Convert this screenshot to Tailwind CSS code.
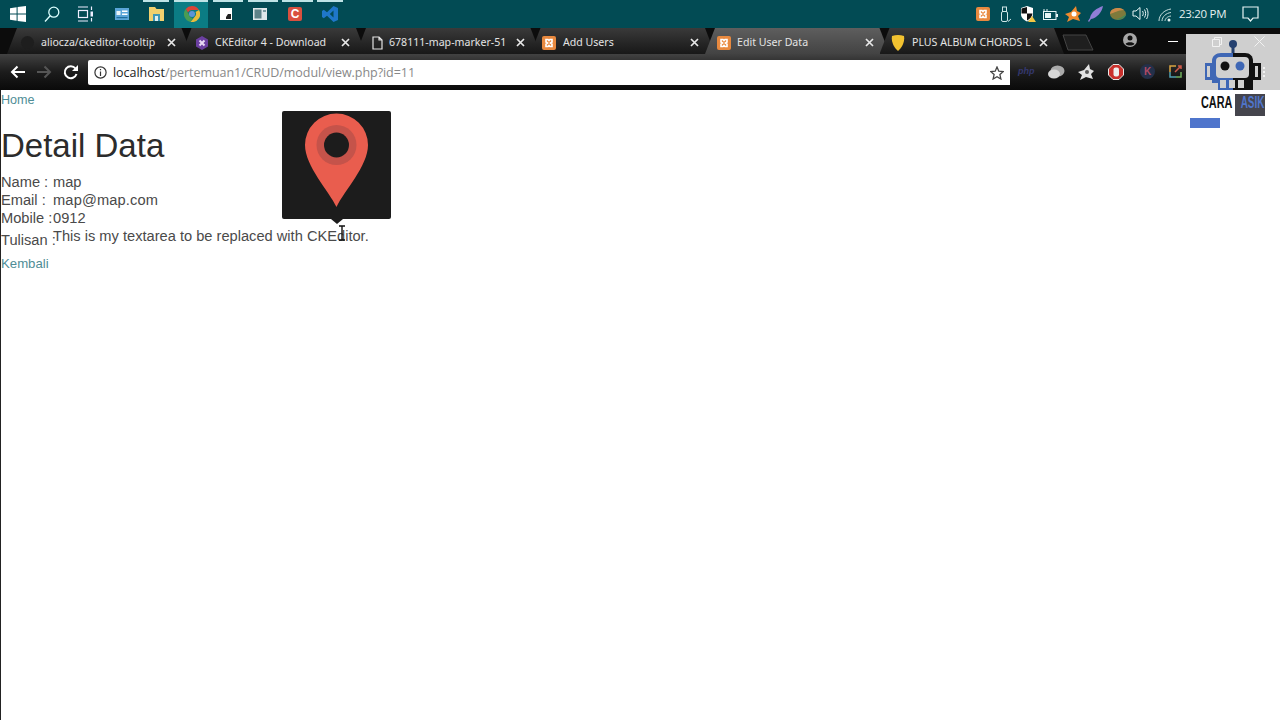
<!DOCTYPE html>
<html lang="en">
<head>
    <meta charset="UTF-8">
    <meta name="viewport" content="width=device-width, initial-scale=1.0">
    <title>Edit User Data</title>
    <script src="https://cdn.jsdelivr.net/npm/@tailwindcss/browser@4"></script>
</head>
<body class="relative w-[1280px] h-[720px] overflow-hidden bg-white font-['Liberation_Sans',sans-serif]">

    <!-- windows taskbar -->
    <div class="relative h-[28px] bg-[#024b54] flex items-center text-[#e6f0f0]">
        <div class="absolute left-[143px] top-0 w-[26px] h-[2px] bg-[#bfe3e6]"></div>
        <div class="absolute left-[174px] top-0 w-[34px] h-[28px] bg-[#0b7c84] border-t-2 border-[#bfe3e6]"></div>
        <div class="absolute left-[213px] top-0 w-[30px] h-[2px] bg-[#bfe3e6]"></div>
        <div class="absolute left-[248px] top-0 w-[30px] h-[2px] bg-[#bfe3e6]"></div>
        <div class="absolute left-[282px] top-0 w-[31px] h-[2px] bg-[#bfe3e6]"></div>
        <div class="absolute left-[317px] top-0 w-[26px] h-[2px] bg-[#bfe3e6]"></div>

        <svg class="absolute left-[10px] top-[6px]" width="16" height="16" viewBox="0 0 16 16"><path fill="#fff" d="M0 2.2 6.6 1.2V7.4H0ZM7.6 1 16 0V7.4H7.6ZM0 8.4H6.6V14.7L0 13.8ZM7.6 8.4H16V16L7.6 14.9Z"/></svg>
        <svg class="absolute left-[44px] top-[6px]" width="16" height="17" viewBox="0 0 16 17" fill="none" stroke="#dff" stroke-width="1.3"><circle cx="9.8" cy="6.2" r="5"/><path d="M6.2 9.8 1 15.5"/></svg>
        <svg class="absolute left-[77px] top-[6px]" width="17" height="16" viewBox="0 0 17 16" fill="none" stroke="#eef" stroke-width="1.2"><path d="M1 1H11M1 15H11"/><rect x="1.5" y="4.5" width="9" height="7"/><path d="M14.5 0.5V4M14.5 12V15.5"/><rect x="13.5" y="5.5" width="2.5" height="5" fill="#eef" stroke="none"/></svg>
        <svg class="absolute left-[115px] top-[8px]" width="14" height="12" viewBox="0 0 14 12"><rect width="14" height="12" fill="#5aa5d8"/><rect x="1.5" y="3" width="4" height="4" fill="#e8f4f8"/><rect x="7" y="2.5" width="5.5" height="1.5" fill="#fff"/><rect x="7" y="5.5" width="5.5" height="1.5" fill="#fff"/><rect x="1.5" y="9" width="11" height="1.2" fill="#1d6d9c"/></svg>
        <svg class="absolute left-[149px] top-[6px]" width="15" height="15" viewBox="0 0 15 15"><path fill="#f1d06e" d="M0 1H6L7.5 3H15V15H0Z"/><path fill="#3f97b7" d="M4 8H11V15H4Z"/><path fill="#dfeef2" d="M6 10H9V15H6Z"/></svg>
        <svg class="absolute left-[184px] top-[6px]" width="16" height="16" viewBox="0 0 16 16"><path fill="#db4437" d="M8 0A8 8 0 0 1 15 4H8A4 4 0 0 0 4 6.5L1.7 3A8 8 0 0 1 8 0Z"/><path fill="#4a9c54" d="M1.7 3 5 8.7A4 4 0 0 0 8.7 12L6.5 15.9A8 8 0 0 1 1.7 3Z"/><path fill="#e7bd3c" d="M15 4A8 8 0 0 1 6.5 15.9L10.5 11A4 4 0 0 0 11.5 6 L15 4Z"/><circle cx="8" cy="8" r="3" fill="#5c94d6"/></svg>
        <svg class="absolute left-[220px] top-[8px]" width="12" height="12" viewBox="0 0 12 12"><path fill="#fff" d="M0 0H12V12H0Z"/><path fill="#222" d="M11 6V11H6V9L8 6Z"/></svg>
        <svg class="absolute left-[253px] top-[8px]" width="14" height="12" viewBox="0 0 14 12"><rect width="14" height="12" fill="#dfe8ea"/><rect x="1.5" y="1.5" width="7" height="9" fill="#5d8288"/><rect x="10" y="2" width="3" height="2" fill="#7d9da2"/></svg>
        <div class="absolute left-[288px] top-[7px] w-[14px] h-[14px] rounded-[2px] bg-[#d9503f] text-white text-[12px] leading-[14px] font-bold text-center">C</div>
        <svg class="absolute left-[322px] top-[6px]" width="16" height="16" viewBox="0 0 16 16"><path fill="#1f77c9" d="M11.5 0 16 2V14L11.5 16 5 9.8 1.8 12.2 0 11V5L1.8 3.8 5 6.2ZM11.5 4.5 7.8 8 11.5 11.5Z"/></svg>

        <!-- tray -->
        <svg class="absolute left-[976px] top-[7px]" width="14" height="14" viewBox="0 0 14 14"><rect width="14" height="14" rx="2" fill="#e8893f"/><path fill="none" stroke="#fff" stroke-width="1.6" d="M4 3.5H6L7 4.5 8 3.5H10V6L8.5 7 10 8V10.5H8L7 9.5 6 10.5H4V8L5.5 7 4 6Z"/></svg>
        <svg class="absolute left-[1000px] top-[6px]" width="12" height="17" viewBox="0 0 12 17" fill="none" stroke="#cfe6e6" stroke-width="1"><rect x="1.5" y="5.5" width="6" height="10" rx="1.5"/><rect x="2.5" y="1" width="4" height="4.5"/><path d="M8 15.5 11 13"/></svg>
        <svg class="absolute left-[1020px] top-[6px]" width="16" height="16" viewBox="0 0 16 16"><path fill="#fff" d="M7 0 13 2V8C13 12 10 14 7 15.5 4 14 1 12 1 8V2Z"/><path fill="#111" d="M7 1V7.5H1.5V2.5ZM7 7.5H12.5C12 11 10 13 7 14.5Z"/><path fill="#f2c744" d="M12 10 16 16H8Z"/></svg>
        <svg class="absolute left-[1043px] top-[9px]" width="15" height="11" viewBox="0 0 15 11"><rect x="0.5" y="2.5" width="12.5" height="8" fill="none" stroke="#e6f4f4"/><rect x="2" y="4" width="6" height="5" fill="#e6f4f4"/><rect x="13" y="5" width="2" height="3" fill="#e6f4f4"/><path d="M1 2V0M4 2V0" stroke="#e6f4f4"/></svg>
        <svg class="absolute left-[1065px] top-[6px]" width="16" height="16" viewBox="0 0 16 16"><path fill="#ef8a2e" d="M11 0 12 5 16 7 13 10 15 15 8 13 2 16 4 11 0 8 6 6Z"/><circle cx="9" cy="8" r="2.5" fill="#fff"/></svg>
        <svg class="absolute left-[1088px] top-[6px]" width="15" height="16" viewBox="0 0 15 16"><path fill="#8f7ed6" d="M15 0C14 6 9 12 3 13L1 16 0 15 2 12C3 6 9 2 15 0Z"/></svg>
        <svg class="absolute left-[1110px] top-[8px]" width="16" height="12" viewBox="0 0 16 12"><ellipse cx="8" cy="6" rx="8" ry="6" fill="#7d7a3c"/><path fill="#c98a4a" d="M0 6A8 6 0 0 1 14 2C8 2 4 5 0 6Z"/><path fill="#3f8a5a" d="M5 11C9 11 13 9 16 6A8 6 0 0 1 5 11Z"/></svg>
        <svg class="absolute left-[1132px] top-[6px]" width="17" height="15" viewBox="0 0 17 15" fill="none" stroke="#e6f4f4" stroke-width="1"><path d="M1 5H4L8 1.5V13.5L4 10H1Z"/><path d="M10.5 5C11.5 6.5 11.5 8.5 10.5 10M12.5 3.5C14 6 14 9 12.5 11.5M14.5 2C16.5 5 16.5 10 14.5 13"/></svg>
        <svg class="absolute left-[1158px] top-[8px]" width="14" height="14" viewBox="0 0 14 14" fill="none" stroke="#c4dcdc" stroke-width="1"><path d="M1 13C1 7 6 2 13 1M4 13C4 9 8 5 13 4.5M7 13C7 11 9 8.5 13 8"/><circle cx="11" cy="12" r="1.5" fill="#e6f4f4" stroke="none"/></svg>
        <span class="absolute left-[1179px] top-[6px] font-['Open_Sans',sans-serif] text-[11.5px] leading-[16px] tracking-[-0.3px] whitespace-nowrap">23:20 PM</span>
        <svg class="absolute left-[1242px] top-[6px]" width="17" height="16" viewBox="0 0 17 16" fill="none" stroke="#e6f4f4" stroke-width="1.2"><path d="M1 1H16V12H11L8.5 15 6 12H1Z"/></svg>
    </div>

    <!-- tab strip -->
    <div class="relative h-[26px] bg-[#0c0c0c] flex pl-[7px] text-[10.6px] font-['Noto_Sans',sans-serif] text-[#e4e4e4]">
        <div class="w-[184.5px] shrink-0 -mr-[10px] pt-[3px] bg-gradient-to-b from-[#3a3a3a] to-[#181818] [clip-path:polygon(0_100%,10px_0,174.5px_0,184.5px_100%)] flex items-center pl-[13.5px]">
            <div class="w-[13px] h-[13px] rounded-full bg-[#1e1e1e] shrink-0"></div>
            <span class="ml-[7.5px] flex-1 whitespace-nowrap">aliocza/ckeditor-tooltip</span>
            <svg class="ml-[8px] mr-[16px] shrink-0" width="9" height="9" viewBox="0 0 9 9" stroke="#e8e8e8" stroke-width="1.7"><path d="M1 1 8 8M8 1 1 8"/></svg>
        </div>
        <div class="w-[184.5px] shrink-0 -mr-[10px] pt-[3px] bg-gradient-to-b from-[#3a3a3a] to-[#181818] [clip-path:polygon(0_100%,10px_0,174.5px_0,184.5px_100%)] flex items-center pl-[13.5px]">
            <svg class="shrink-0" width="14" height="14" viewBox="0 0 14 14"><path fill="#6b3fa0" d="M7 0 13 3.5V10.5L7 14 1 10.5V3.5Z"/><path stroke="#e8d8f4" stroke-width="2" d="M4.5 4.5 9.5 9.5M9.5 4.5 4.5 9.5"/></svg>
            <span class="ml-[6px] flex-1 whitespace-nowrap">CKEditor 4 - Download</span>
            <svg class="ml-[8px] mr-[16px] shrink-0" width="9" height="9" viewBox="0 0 9 9" stroke="#e8e8e8" stroke-width="1.7"><path d="M1 1 8 8M8 1 1 8"/></svg>
        </div>
        <div class="w-[184.5px] shrink-0 -mr-[10px] pt-[3px] bg-gradient-to-b from-[#3a3a3a] to-[#181818] [clip-path:polygon(0_100%,10px_0,174.5px_0,184.5px_100%)] flex items-center pl-[15.5px]">
            <svg class="shrink-0" width="11" height="14" viewBox="0 0 11 14" fill="none" stroke="#e4e4e4" stroke-width="1.2"><path d="M1 1H7L10 4V13H1ZM7 1V4H10"/></svg>
            <span class="ml-[6.5px] flex-1 whitespace-nowrap">678111-map-marker-51</span>
            <svg class="ml-[8px] mr-[16px] shrink-0" width="9" height="9" viewBox="0 0 9 9" stroke="#e8e8e8" stroke-width="1.7"><path d="M1 1 8 8M8 1 1 8"/></svg>
        </div>
        <div class="w-[184.5px] shrink-0 -mr-[10px] pt-[3px] bg-gradient-to-b from-[#3a3a3a] to-[#181818] [clip-path:polygon(0_100%,10px_0,174.5px_0,184.5px_100%)] flex items-center pl-[11.5px]">
            <svg class="shrink-0" width="14" height="14" viewBox="0 0 14 14"><rect width="14" height="14" rx="2" fill="#e8893f"/><path fill="none" stroke="#fff" stroke-width="1.6" d="M4 3.5H6L7 4.5 8 3.5H10V6L8.5 7 10 8V10.5H8L7 9.5 6 10.5H4V8L5.5 7 4 6Z"/></svg>
            <span class="ml-[7px] flex-1 whitespace-nowrap">Add Users</span>
            <svg class="ml-[8px] mr-[16px] shrink-0" width="9" height="9" viewBox="0 0 9 9" stroke="#e8e8e8" stroke-width="1.7"><path d="M1 1 8 8M8 1 1 8"/></svg>
        </div>
        <div class="w-[184.5px] shrink-0 -mr-[10px] pt-[3px] bg-gradient-to-b from-[#5e5e5e] to-[#434343] [clip-path:polygon(0_100%,10px_0,174.5px_0,184.5px_100%)] flex items-center pl-[12px]">
            <svg class="shrink-0" width="14" height="14" viewBox="0 0 14 14"><rect width="14" height="14" rx="2" fill="#e8893f"/><path fill="none" stroke="#fff" stroke-width="1.6" d="M4 3.5H6L7 4.5 8 3.5H10V6L8.5 7 10 8V10.5H8L7 9.5 6 10.5H4V8L5.5 7 4 6Z"/></svg>
            <span class="ml-[6px] flex-1 whitespace-nowrap">Edit User Data</span>
            <svg class="ml-[8px] mr-[16px] shrink-0" width="9" height="9" viewBox="0 0 9 9" stroke="#e8e8e8" stroke-width="1.7"><path d="M1 1 8 8M8 1 1 8"/></svg>
        </div>
        <div class="w-[184.5px] shrink-0 -mr-[10px] pt-[3px] bg-gradient-to-b from-[#3a3a3a] to-[#181818] [clip-path:polygon(0_100%,10px_0,174.5px_0,184.5px_100%)] flex items-center pl-[11.5px]">
            <svg class="shrink-0" width="14" height="16" viewBox="0 0 14 16"><path fill="#f2c230" d="M1 1C5 -0.3 9 -0.3 13 1 14 7 11 13 7 16 3 13 0 7 1 1Z"/></svg>
            <span class="ml-[7px] flex-1 whitespace-nowrap">PLUS ALBUM CHORDS L</span>
            <svg class="ml-[8px] mr-[16px] shrink-0" width="9" height="9" viewBox="0 0 9 9" stroke="#e8e8e8" stroke-width="1.7"><path d="M1 1 8 8M8 1 1 8"/></svg>
        </div>
        <svg class="ml-[8px] mt-[6px] shrink-0" width="32" height="17" viewBox="0 0 32 17"><path fill="#1f1f1f" stroke="#444" d="M1 1H24L31 16H6Z"/></svg>

        <svg class="absolute left-[1123px] top-[5px]" width="14" height="14" viewBox="0 0 14 14"><circle cx="7" cy="7" r="7" fill="#a8a8a8"/><circle cx="7" cy="5" r="2.5" fill="#111"/><path fill="#111" d="M2.5 11C3.5 8.5 10.5 8.5 11.5 11 9 13 5 13 2.5 11Z"/></svg>
        <div class="absolute left-[1168px] top-[13px] w-[10px] h-[1px] bg-white"></div>
    </div>

    <!-- address bar -->
    <div class="h-[36px] bg-gradient-to-b from-[#424242] via-[#1c1c1c] to-[#0a0a0a] flex items-start pt-[6px]">
        <div class="w-[88px] shrink-0 relative h-[25px]">
            <svg class="absolute left-[10px] top-[5px]" width="15" height="14" viewBox="0 0 15 14" fill="none" stroke="#fff" stroke-width="2"><path d="M15 7H2M7.5 1.5 2 7 7.5 12.5"/></svg>
            <svg class="absolute left-[37px] top-[5px]" width="15" height="14" viewBox="0 0 15 14" fill="none" stroke="#555" stroke-width="2"><path d="M0 7H13M7.5 1.5 13 7 7.5 12.5"/></svg>
            <svg class="absolute left-[63px] top-[5px]" width="15" height="15" viewBox="0 0 15 15" fill="none" stroke="#fff" stroke-width="2"><path d="M12.5 3.5A6 6 0 1 0 13.5 9"/><path fill="#fff" stroke="none" d="M9 6H15V0Z"/></svg>
        </div>
        <div class="w-[922px] h-[25px] shrink-0 bg-white rounded-l-[2px] flex items-center pl-[6px] pr-[6px] font-['Open_Sans',sans-serif] text-[12.5px] text-[#888]">
            <svg class="shrink-0" width="13" height="13" viewBox="0 0 13 13" fill="none" stroke="#333" stroke-width="1.2"><circle cx="6.5" cy="6.5" r="5.6"/><path d="M6.5 5.5V10M6.5 3V4.3"/></svg>
            <span class="ml-[6px] pt-[1px] tracking-[-0.05px]"><span class="text-[#222]">localhost</span>/pertemuan1/CRUD/modul/view.php?id=11</span>
            <svg class="ml-auto" width="14" height="14" viewBox="0 0 14 14" fill="none" stroke="#444" stroke-width="1.3"><path d="M7 1 8.8 5.2 13.3 5.6 9.9 8.6 10.9 13 7 10.7 3.1 13 4.1 8.6 0.7 5.6 5.2 5.2Z"/></svg>
        </div>
        <div class="relative flex-1 h-[25px]">
            <span class="absolute left-[8px] top-[5px] text-[9px] italic font-bold text-[#34386e]">php</span>
            <svg class="absolute left-[38px] top-[5px]" width="17" height="14" viewBox="0 0 17 14"><ellipse cx="9.5" cy="6" rx="7" ry="5.5" fill="#aaa"/><ellipse cx="6" cy="9" rx="6" ry="4.5" fill="#d8d8d8"/></svg>
            <svg class="absolute left-[68px] top-[4px]" width="16" height="16" viewBox="0 0 16 16"><path fill="#e2e2e2" d="M11 0 12 5 16 7 13 10 15 15 8 13 2 16 4 11 0 8 6 6Z"/><circle cx="9" cy="8" r="2" fill="#555"/></svg>
            <svg class="absolute left-[98px] top-[4px]" width="16" height="16" viewBox="0 0 16 16"><path fill="#c9302c" stroke="#e8e8e8" d="M5 .5H11L15.5 5V11L11 15.5H5L.5 11V5Z"/><rect x="5.5" y="3.5" width="5.5" height="9" rx="2" fill="#eee"/></svg>
            <div class="absolute left-[130px] top-[4px] w-[15px] h-[15px] rounded-full bg-[#24304a] text-[#b04a66] text-[10px] leading-[15px] font-bold text-center">K</div>
            <svg class="absolute left-[159px] top-[5px]" width="13" height="13" viewBox="0 0 13 13" fill="none" stroke-width="1.5"><path stroke="#d9a441" d="M7 1H1V7"/><path stroke="#4f9fb0" d="M1 7V12H7"/><path stroke="#6fae5c" d="M7 12H12V7"/><path stroke="#cf5a4a" d="M6 7 12 1M9 1H12V4"/></svg>
        </div>
    </div>

    <!-- page content -->
    <main class="relative h-[630px] pt-[1px] border-l border-[#222] text-[14.65px] leading-[18px] text-[#4a4a4a]">
        <a href="#" class="block h-[18px] text-[12.6px] leading-[18px] text-[#4f8d96]">Home</a>
        <h1 class="mt-[18px] h-[38px] text-[33px] leading-[38px] font-normal text-[#2c2c2c]">Detail Data</h1>
        <div class="mt-[8px] grid grid-cols-[52px_1fr] whitespace-nowrap">
            <div>Name :</div><div>map</div>
            <div>Email :</div><div class="tracking-[0.15px]">map@map.com</div>
            <div>Mobile :</div><div>0912</div>
            <div class="pt-[2px] leading-[22px]">Tulisan :</div><div class="leading-[18px]">This is my textarea to be replaced with CKEditor.</div>
        </div>
        <a href="#" class="block mt-[4px] text-[13.2px] leading-[18px] text-[#4f8d96]">Kembali</a>

        <!-- hover tooltip with the map marker image -->
        <div class="absolute left-[281px] top-[21px] w-[109px] h-[108px] rounded-[2px] bg-[#1c1c1c]">
            <svg width="109" height="108" viewBox="0 0 109 108">
                <path fill="#e95d4e" d="M54.5 96C47 80 23 55 23 34A31.5 31.5 0 0 1 86 34C86 55 62 80 54.5 96Z"/>
                <circle cx="54.5" cy="34" r="20" fill="#c5534a"/>
                <circle cx="54.5" cy="34" r="12.5" fill="#1c1c1c"/>
            </svg>
            <div class="absolute left-[49px] top-[108px] w-0 h-0 border-x-[6px] border-x-transparent border-t-[5px] border-t-[#1c1c1c]"></div>
        </div>
        <!-- mouse cursor -->
        <svg class="absolute left-[336px] top-[135px]" width="10" height="16" viewBox="0 0 10 16" fill="none" stroke="#111" stroke-width="1.4"><path d="M2 1H8M5 1V15M2 15H8"/></svg>
    </main>

    <!-- window controls and channel watermark on top of the browser -->
    <div class="absolute left-[1186px] top-[34px] w-[94px] h-[56px] bg-[#cfcfcf]">
        <svg class="absolute left-[25px] top-[2px]" width="12" height="12" viewBox="0 0 12 12" fill="none" stroke="#f2f2f2"><path d="M1.5 3.5H8.5V10.5H1.5ZM3.5 3.5V1.5H10.5V8.5H8.5"/></svg>
        <svg class="absolute left-[68px] top-[2px]" width="11" height="11" viewBox="0 0 11 11" fill="none" stroke="#f2f2f2"><path d="M.5 .5 10.5 10.5M10.5 .5 .5 10.5"/></svg>
        <div class="absolute left-[77px] top-[33px] w-[2px] h-[2px] bg-[#f2f2f2]"></div>
        <div class="absolute left-[77px] top-[37px] w-[2px] h-[2px] bg-[#f2f2f2]"></div>
        <div class="absolute left-[77px] top-[41px] w-[2px] h-[2px] bg-[#f2f2f2]"></div>
    </div>
    <svg class="absolute left-[1203px] top-[38px]" width="60" height="52" viewBox="0 0 60 52">
        <circle cx="30" cy="6" r="4" fill="#24406f"/>
        <rect x="28.5" y="6" width="3" height="10" fill="#24406f"/>
        <path fill="#3f67b5" d="M9 23C9 18 13 15 18 15H30V52H15V45H9Z"/>
        <path fill="#111" d="M30 15H42C47 15 50 18 50 23V52H30Z"/>
        <rect x="2" y="25" width="7" height="17" fill="#3f67b5"/>
        <rect x="50" y="25" width="8" height="17" fill="#111"/>
        <rect x="4" y="28" width="3" height="11" fill="#d0d0d0"/>
        <rect x="52" y="28" width="3" height="11" fill="#d0d0d0"/>
        <rect x="13" y="19" width="33" height="21" rx="4" fill="#d0d0d0"/>
        <circle cx="22" cy="28" r="4.5" fill="#111"/>
        <circle cx="37" cy="28" r="4.5" fill="#3f67b5"/>
        <rect x="17" y="42" width="6" height="8" fill="#d0d0d0"/>
        <rect x="26" y="42" width="6" height="8" fill="#d0d0d0"/>
        <rect x="35" y="42" width="6" height="8" fill="#d0d0d0"/>
    </svg>
    <span class="absolute left-[1201px] top-[95px] origin-left scale-x-[0.68] text-[16px] leading-[16px] font-bold text-[#111] whitespace-nowrap">CARA</span>
    <div class="absolute left-[1235px] top-[94px] w-[30px] h-[22px] bg-[#45454d] text-[#4f75cc]">
        <span class="block mt-[1px] origin-center scale-x-[0.62] text-center text-[16px] leading-[16px] font-bold whitespace-nowrap">ASIK</span>
    </div>
    <div class="absolute left-[1190px] top-[118px] w-[30px] h-[10px] bg-[#4f75cc]"></div>
</body>
</html>
